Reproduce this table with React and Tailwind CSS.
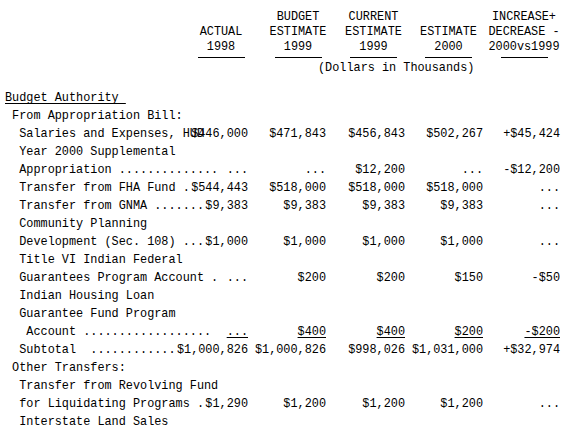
import React from "react";

const heads = [
  { w: "w-[78px]", lines: ["", "ACTUAL", "1998"] },
  { w: "w-[76px]", lines: ["BUDGET", "ESTIMATE", "1999"] },
  { w: "w-[75px]", lines: ["CURRENT", "ESTIMATE", "1999"] },
  { w: "w-[75px]", lines: ["", "ESTIMATE", "2000"] },
  { w: "w-[76px]", lines: ["INCREASE+", "DECREASE -", "2000vs1999"] },
];

const colStart = ["col-start-1", "col-start-2", "col-start-3", "col-start-4", "col-start-5"];

const rows = [
  { label: " From Appropriation Bill:" },
  { label: "  Salaries and Expenses, HUD", vals: ["$446,000", "$471,843", "$456,843", "$502,267", "+$45,424"] },
  { label: "  Year 2000 Supplemental" },
  { label: "  Appropriation ..............", vals: ["...", "...", "$12,200", "...", "-$12,200"] },
  { label: "  Transfer from FHA Fund .", vals: ["$544,443", "$518,000", "$518,000", "$518,000", "..."] },
  { label: "  Transfer from GNMA .......", vals: ["$9,383", "$9,383", "$9,383", "$9,383", "..."] },
  { label: "  Community Planning" },
  { label: "  Development (Sec. 108) ...", vals: ["$1,000", "$1,000", "$1,000", "$1,000", "..."] },
  { label: "  Title VI Indian Federal" },
  { label: "  Guarantees Program Account .", vals: ["...", "$200", "$200", "$150", "-$50"] },
  { label: "  Indian Housing Loan" },
  { label: "  Guarantee Fund Program" },
  { label: "   Account ..................", vals: ["...", "$400", "$400", "$200", "-$200"], ul: true },
  { label: "  Subtotal  ............", vals: ["$1,000,826", "$1,000,826", "$998,026", "$1,031,000", "+$32,974"] },
  { label: " Other Transfers:" },
  { label: "  Transfer from Revolving Fund" },
  { label: "  for Liquidating Programs .", vals: ["$1,290", "$1,200", "$1,200", "$1,200", "..."] },
  { label: "  Interstate Land Sales" },
];

function Row({ label, vals, ul }) {
  return (
    <div className="grid grid-cols-[248px_78px_79px_78px_77px] h-[18px] leading-[18px]">
      <span className="col-start-1 row-start-1 whitespace-pre pl-[5px]">{label}</span>
      {vals &&
        vals.map((v, i) => (
          <div key={i} className={`${colStart[i]} row-start-1 text-right whitespace-pre`}>
            <span className={ul ? "underline underline-offset-2" : ""}>{v}</span>
          </div>
        ))}
    </div>
  );
}

export default function App() {
  return (
    <div className="w-[575px] h-[425px] overflow-hidden bg-white text-black font-['Liberation_Mono','Courier_New',monospace] text-[11.85px]">
      {/* column headings */}
      <div className="flex pl-[182px] pt-[10px]">
        {heads.map((h, i) => (
          <div key={i} className={`${h.w} flex flex-col items-center leading-[15px]`}>
            {h.lines.map((l, j) => (
              <div key={j} className="h-[15px] whitespace-pre">{l}</div>
            ))}
            <div className="w-[47px] h-px bg-black mt-[2px]" />
          </div>
        ))}
      </div>
      <div className="pl-[318px] mt-[3px] leading-[14px] whitespace-pre">(Dollars in Thousands)</div>

      {/* body */}
      <div className="mt-[14px]">
        <div className="h-[18px] leading-[18px] pl-[5px]">
          <span className="underline underline-offset-2 whitespace-pre">Budget Authority </span>
        </div>
        {rows.map((r, i) => (
          <Row key={i} {...r} />
        ))}
      </div>
    </div>
  );
}
